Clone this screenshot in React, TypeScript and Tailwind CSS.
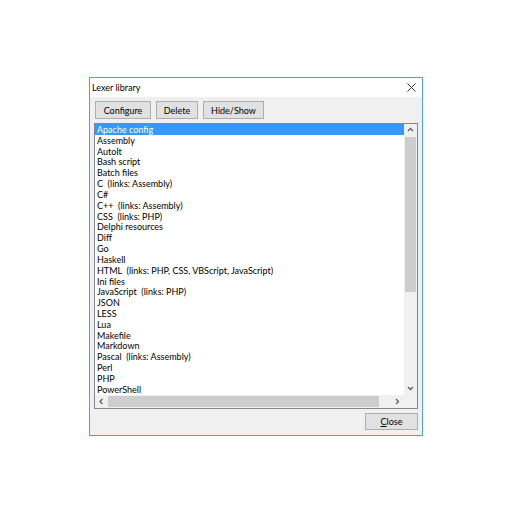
import React from "react";

const items = [
  "Apache config",
  "Assembly",
  "AutoIt",
  "Bash script",
  "Batch files",
  "C  (links: Assembly)",
  "C#",
  "C++  (links: Assembly)",
  "CSS  (links: PHP)",
  "Delphi resources",
  "Diff",
  "Go",
  "Haskell",
  "HTML  (links: PHP, CSS, VBScript, JavaScript)",
  "Ini files",
  "JavaScript  (links: PHP)",
  "JSON",
  "LESS",
  "Lua",
  "Makefile",
  "Markdown",
  "Pascal  (links: Assembly)",
  "Perl",
  "PHP",
  "PowerShell",
];

function Chevron({ dir }: { dir: "up" | "down" | "left" | "right" }) {
  const pts: Record<string, string> = {
    up: "1,4 3.5,1.5 6,4",
    down: "1,2 3.5,4.5 6,2",
    left: "4.5,1 2,3.5 4.5,6",
    right: "2,1 4.5,3.5 2,6",
  };
  return (
    <svg width="7" height="7" viewBox="0 0 7 7">
      <polyline points={pts[dir]} fill="none" stroke="#606060" strokeWidth="1.3" />
    </svg>
  );
}

function Btn({ children, w }: { children: React.ReactNode; w: string }) {
  return (
    <div
      className={`${w} h-[18px] flex items-center justify-center bg-[#e1e1e1] border border-[#adadad] text-[9px] leading-none text-black`}
    >
      {children}
    </div>
  );
}

export default function App() {
  return (
    <div
      className="w-[512px] h-[512px] bg-white pt-[77px] pl-[89px]"
      style={{ fontFamily: 'Lato, "Liberation Sans", sans-serif' }}
    >
      <div className="w-[334px] border border-[#4ca2e8] bg-[#f0f0f0] flex flex-col">
        <div className="h-[19px] bg-white flex items-center justify-between pl-[2px] pr-[6px]">
          <span className="text-[9px] text-black leading-none">Lexer library</span>
          <svg width="9" height="9" viewBox="0 0 9 9">
            <path d="M0.5 0.5 L8.5 8.5 M8.5 0.5 L0.5 8.5" stroke="#333" strokeWidth="1" />
          </svg>
        </div>
        <div className="flex flex-col pl-[4px] pr-[4px]">
          <div className="flex gap-[5px] mt-[4px] pl-[1px]">
            <Btn w="w-[56px]">Configure</Btn>
            <Btn w="w-[42px]">Delete</Btn>
            <Btn w="w-[61px]">Hide/Show</Btn>
          </div>
          <div className="mt-[4px] w-[324px] h-[286px] border border-[#828790] bg-white flex flex-col">
            <div className="flex h-[271px]">
              <div className="w-[309px] flex flex-col overflow-hidden">
                {items.map((it, i) => (
                  <div
                    key={it}
                    className={`h-[10.84px] shrink-0 flex items-center pl-[2px] text-[9px] whitespace-pre leading-none ${
                      i === 0 ? "bg-[#3399ff] text-white" : "text-black"
                    }`}
                  >
                    {it}
                  </div>
                ))}
              </div>
              <div className="w-[13px] bg-[#f0f0f0] flex flex-col">
                <div className="h-[13px] flex items-center justify-center">
                  <Chevron dir="up" />
                </div>
                <div className="flex-1 flex flex-col">
                  <div className="h-[155px] mx-[1px] bg-[#cdcdcd]" />
                </div>
                <div className="h-[13px] flex items-center justify-center">
                  <Chevron dir="down" />
                </div>
              </div>
            </div>
            <div className="flex h-[13px]">
              <div className="w-[309px] bg-[#f0f0f0] flex">
                <div className="w-[13px] flex items-center justify-center">
                  <Chevron dir="left" />
                </div>
                <div className="flex-1 flex items-center">
                  <div className="w-[271px] h-[11px] bg-[#cdcdcd]" />
                </div>
                <div className="w-[13px] flex items-center justify-center">
                  <Chevron dir="right" />
                </div>
              </div>
              <div className="w-[13px] bg-[#f0f0f0]" />
            </div>
          </div>
          <div className="flex justify-end mt-[4px] mb-[5px]">
            <div className="w-[53px] h-[17px] flex items-center justify-center bg-[#e1e1e1] border border-[#adadad] text-[9px] leading-none text-black">
              <span>
                <span className="underline">C</span>lose
              </span>
            </div>
          </div>
        </div>
      </div>
    </div>
  );
}
